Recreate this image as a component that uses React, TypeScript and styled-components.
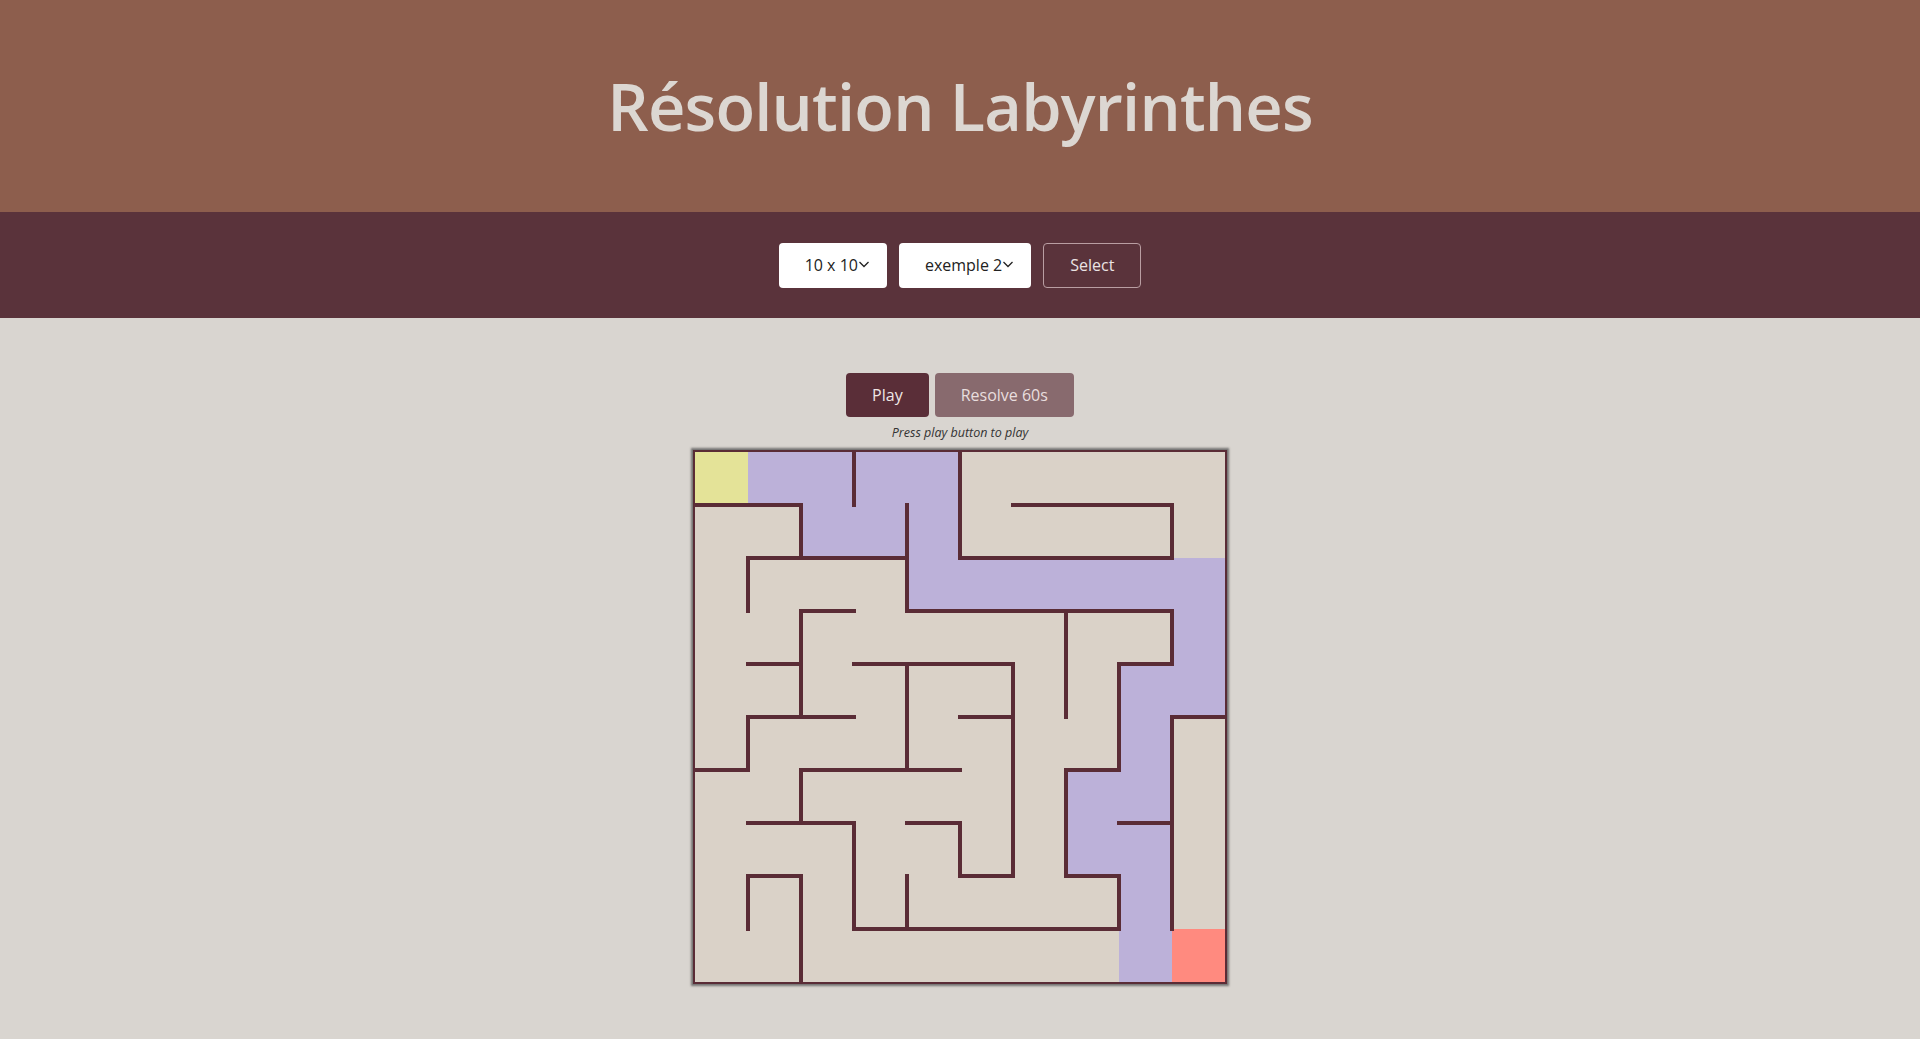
import React from 'react';
import styled, { createGlobalStyle, css } from 'styled-components';

type Fill = 'b' | 'p' | 's' | 'e';

// walls on top of each cell (row line r), 1 = wall
const TOP_WALLS = [
  '0000000000',
  '1100001110',
  '0111011110',
  '0010111110',
  '0101110010',
  '0110010001',
  '1011100100',
  '0110100010',
  '0100010100',
  '0001111100',
];

// walls on the left of each cell (col line c), 1 = wall
const LEFT_WALLS = [
  '0001010000',
  '0010110001',
  '0100100000',
  '0010000101',
  '0010101110',
  '0100101011',
  '0010001101',
  '0001011101',
  '0111100011',
  '0010000000',
];

const FILLS = [
  'sppppbbbbb',
  'bbpppbbbbb',
  'bbbbpppppp',
  'bbbbbbbbbp',
  'bbbbbbbbpp',
  'bbbbbbbbpb',
  'bbbbbbbppb',
  'bbbbbbbppb',
  'bbbbbbbbpb',
  'bbbbbbbbpe',
];

const FILL_COLORS: Record<Fill, string> = {
  b: '#dad2c8',
  p: '#bcb1d9',
  s: '#e4e398',
  e: '#ff8a7f',
};

const WALL = '#5a2c36';

const GlobalStyle = createGlobalStyle`
  body {
    margin: 0;
    background-color: #d9d5d0;
    font-family: 'Open Sans', 'Noto Sans', sans-serif;
  }
`;

const Chevron = () => (
  <svg width="12" height="12" viewBox="0 0 12 12" fill="none">
    <path d="M1.5 4 L6 8.5 L10.5 4" stroke="#222" strokeWidth="1.3" />
  </svg>
);

const App: React.FC = () => {
  return (
    <>
      <GlobalStyle />
      <Header>
        <Title>Résolution Labyrinthes</Title>
      </Header>
      <NavBar>
        <SelectBox>
          10 x 10
          <Chevron />
        </SelectBox>
        <SelectBox>
          exemple 2
          <Chevron />
        </SelectBox>
        <SelectButton>Select</SelectButton>
      </NavBar>
      <Main>
        <Controls>
          <ActionButton $variant="play">Play</ActionButton>
          <ActionButton $variant="resolve">Resolve 60s</ActionButton>
        </Controls>
        <Hint>Press play button to play</Hint>
        <Maze>
          {FILLS.map((row, r) =>
            row.split('').map((f, c) => (
              <Cell
                key={`cell-${r}-${c}`}
                $fill={f as Fill}
                $top={TOP_WALLS[r][c] === '1'}
                $left={LEFT_WALLS[r][c] === '1'}
              />
            ))
          )}
        </Maze>
      </Main>
    </>
  );
};

const Header = styled.header`
  height: 212px;
  background-color: #8d5e4d;
  display: flex;
  align-items: center;
  justify-content: center;
`;

const Title = styled.h1`
  margin: 0;
  font-size: 65px;
  font-weight: 600;
  color: #dcd7d2;
  letter-spacing: -0.8px;
`;

const NavBar = styled.nav`
  height: 106px;
  background-color: #5a333b;
  display: flex;
  align-items: center;
  justify-content: center;
  gap: 12px;
`;

const SelectBox = styled.div`
  height: 45px;
  box-sizing: border-box;
  padding: 0 17px 0 26px;
  display: flex;
  align-items: center;
  background-color: #ffffff;
  border-radius: 4px;
  font-size: 16px;
  color: #222;

  svg {
    margin-top: -2px;
  }
`;

const SelectButton = styled.button`
  height: 45px;
  padding: 0 26px;
  background: transparent;
  border: 1px solid #b99ea2;
  border-radius: 4px;
  font-family: inherit;
  font-size: 16px;
  color: #ebe3e3;
`;

const Main = styled.main`
  display: flex;
  flex-direction: column;
  align-items: center;
  padding-top: 55px;
`;

const Controls = styled.div`
  display: flex;
  gap: 6px;
`;

const ActionButton = styled.button<{ $variant: 'play' | 'resolve' }>`
  height: 44px;
  padding: 0 26px;
  border: none;
  border-radius: 4px;
  font-family: inherit;
  font-size: 16px;
  background-color: ${({ $variant }) => ($variant === 'play' ? '#5a2e38' : '#886a6e')};
  color: ${({ $variant }) => ($variant === 'play' ? '#efe6e6' : '#e8dede')};
`;

const Hint = styled.p`
  margin: 8px 0 9px;
  font-size: 12.5px;
  line-height: 16px;
  font-style: italic;
  color: #333;
`;

const Maze = styled.div`
  display: grid;
  grid-template-columns: repeat(10, 53px);
  grid-template-rows: repeat(10, 53px);
  border: 2px solid ${WALL};
  box-shadow: 0 0 2px 2px rgba(90, 90, 90, 0.8);
  margin-bottom: 40px;
`;

const Cell = styled.div<{ $fill: Fill; $top: boolean; $left: boolean }>`
  position: relative;
  background-color: ${({ $fill }) => FILL_COLORS[$fill]};

  ${({ $top }) =>
    $top &&
    css`
      &::before {
        content: '';
        position: absolute;
        z-index: 1;
        top: -2px;
        left: -2px;
        width: calc(100% + 4px);
        height: 4px;
        background-color: ${WALL};
      }
    `}

  ${({ $left }) =>
    $left &&
    css`
      &::after {
        content: '';
        position: absolute;
        z-index: 1;
        top: -2px;
        left: -2px;
        width: 4px;
        height: calc(100% + 4px);
        background-color: ${WALL};
      }
    `}
`;

export default App;
